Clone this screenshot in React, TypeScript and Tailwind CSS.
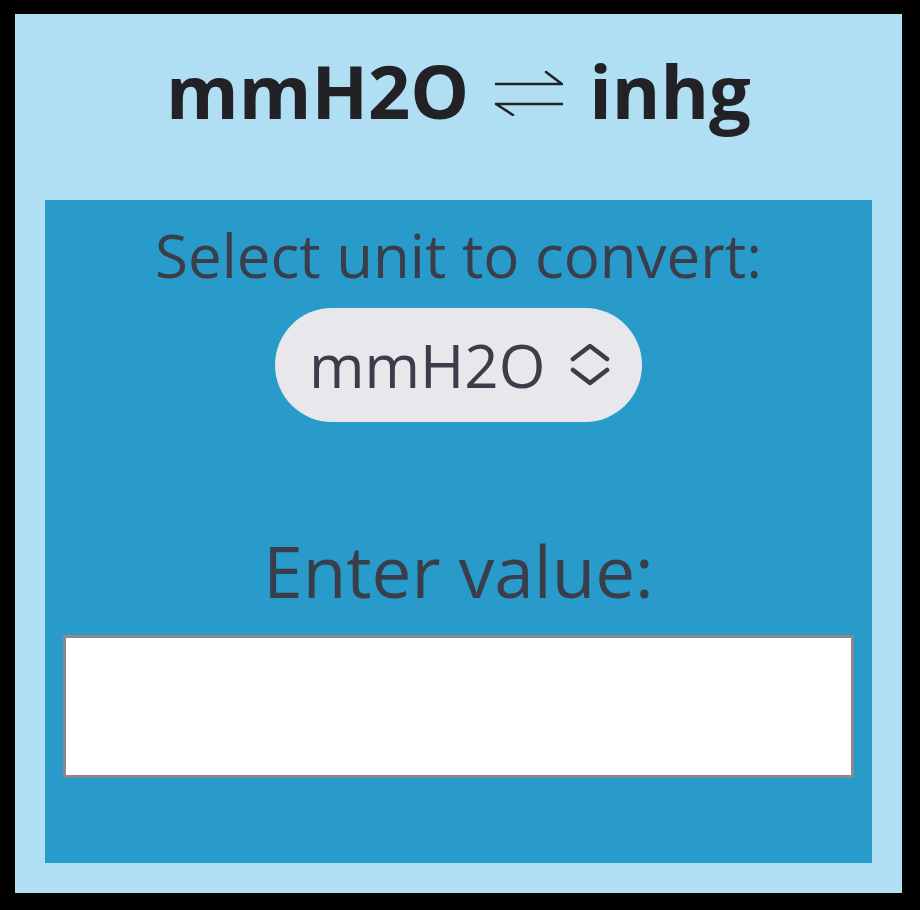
import { useState } from 'react';

function Harpoons() {
  return (
    <svg width="68" height="46" viewBox="0 0 68 46" className="mx-[26px] mt-[16px] self-start shrink-0" fill="none" stroke="#222226" strokeWidth="2.6" strokeLinecap="round">
      <path d="M1 14 H67 L51 2" />
      <path d="M1 34 H67 M1 34 L18 45" />
    </svg>
  );
}

function UpDown() {
  return (
    <svg width="40" height="44" viewBox="0 0 40 44" fill="none" stroke="#3b3e4a" strokeWidth="4.6" strokeLinecap="round" strokeLinejoin="round">
      <path d="M3 16 L20 3 L37 16" />
      <path d="M3 27 L20 40 L37 27" />
    </svg>
  );
}

export default function App() {
  const [value, setValue] = useState('');

  return (
    <div className="w-[920px] h-[910px] bg-black pl-[15px] pt-[14px] pr-[18px] pb-[17px] font-['Open_Sans',sans-serif]">
      <div className="h-full bg-[#b0def2] px-[30px] pb-[30px] flex flex-col">
        {/* Title */}
        <div className="h-[186px] pt-[40px] flex justify-center">
          <h1 className="flex h-[74px] text-[74px] leading-[74px] font-bold text-[#222226]">
            <span>mmH2O</span>
            <Harpoons />
            <span>inhg</span>
          </h1>
        </div>

        {/* Converter panel */}
        <div className="flex-1 bg-[#289bcb] flex flex-col items-center pt-[25px] px-[18px]">
          <p className="text-[60px] leading-[60px] text-[#3a3d4a]">Select unit to convert:</p>
          <button className="mt-[23px] h-[114px] w-[367px] rounded-full bg-[#e8e8ec] flex items-center pl-[34px] pr-[32px] justify-between">
            <span className="text-[60px] leading-[60px] text-[#3b3e4a]">mmH2O</span>
            <UpDown />
          </button>
          <p className="mt-[113px] text-[71px] leading-[71px] text-[#3a3d4a]">Enter value:</p>
          <input
            value={value}
            onChange={(e) => setValue(e.target.value)}
            className="mt-[29px] w-full h-[143px] bg-white border-[3px] border-[#8a8a8e] outline-none px-3 text-[40px]"
          />
        </div>
      </div>
    </div>
  );
}
